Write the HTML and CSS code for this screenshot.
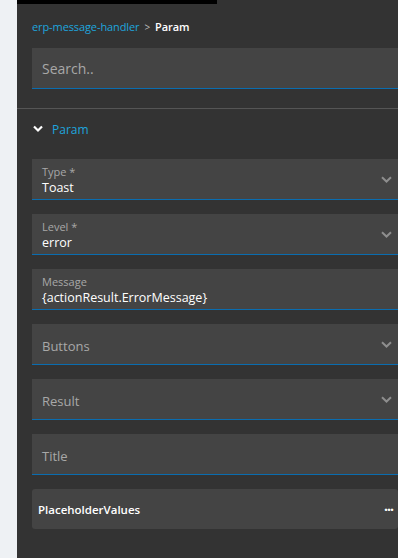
FILE: index.html
```html
<!DOCTYPE html>
<html lang="en">
<head>
  <meta charset="UTF-8">
  <title>Param</title>
  <link rel="stylesheet" href="styles.css">
</head>
<body>
  <div class="gutter"></div>
  <div class="panel">
    <div class="topbar"></div>

    <div class="breadcrumb">
      <a href="#" class="crumb-link">erp-message-handler</a>
      <span class="crumb-sep">&gt;</span>
      <span class="crumb-current">Param</span>
    </div>

    <div class="search">
      <input type="text" placeholder="Search..">
    </div>

    <div class="section">
      <div class="section-head">
        <svg class="caret" width="10" height="8" viewBox="0 0 10 8">
          <path d="M1 1.5 L5 5.5 L9 1.5" fill="none" stroke="#fff" stroke-width="2.2"/>
        </svg>
        <span>Param</span>
      </div>

      <div class="fields">
        <div class="field">
          <div class="field-body">
            <label>Type *</label>
            <div class="value">Toast</div>
          </div>
          <svg class="chev" width="11" height="7" viewBox="0 0 11 7"><path d="M1 1.2 L5.5 5.5 L10 1.2" fill="none" stroke="#8e8e8e" stroke-width="2"/></svg>
        </div>

        <div class="field">
          <div class="field-body">
            <label>Level *</label>
            <div class="value">error</div>
          </div>
          <svg class="chev" width="11" height="7" viewBox="0 0 11 7"><path d="M1 1.2 L5.5 5.5 L10 1.2" fill="none" stroke="#8e8e8e" stroke-width="2"/></svg>
        </div>

        <div class="field">
          <div class="field-body">
            <label>Message</label>
            <div class="value">{actionResult.ErrorMessage}</div>
          </div>
        </div>

        <div class="field">
          <div class="field-body">
            <div class="placeholder">Buttons</div>
          </div>
          <svg class="chev" width="11" height="7" viewBox="0 0 11 7"><path d="M1 1.2 L5.5 5.5 L10 1.2" fill="none" stroke="#8e8e8e" stroke-width="2"/></svg>
        </div>

        <div class="field">
          <div class="field-body">
            <div class="placeholder">Result</div>
          </div>
          <svg class="chev" width="11" height="7" viewBox="0 0 11 7"><path d="M1 1.2 L5.5 5.5 L10 1.2" fill="none" stroke="#8e8e8e" stroke-width="2"/></svg>
        </div>

        <div class="field">
          <div class="field-body">
            <div class="placeholder">Title</div>
          </div>
        </div>

        <div class="group">
          <span>PlaceholderValues</span>
          <span class="more">&middot;&middot;&middot;</span>
        </div>
      </div>
    </div>
  </div>
</body>
</html>
```

FILE: styles.css
```css
/* Base */
* {
  margin: 0;
  padding: 0;
  box-sizing: border-box;
}

body {
  display: flex;
  width: 398px;
  height: 558px;
  overflow: hidden;
  background: #333333;
  font-family: "Open Sans", "Noto Sans", sans-serif;
  color: #ffffff;
}

.gutter {
  width: 17px;
  flex-shrink: 0;
  background: #eef1f4;
}

.panel {
  flex: 1;
  min-width: 0;
  background: #333333;
}

.topbar {
  width: 200px;
  height: 4px;
  background: #000000;
}

/* Breadcrumb */
.breadcrumb {
  display: flex;
  align-items: center;
  gap: 5px;
  height: 21px;
  margin-top: 12px;
  padding-left: 15px;
  font-size: 11px;
  letter-spacing: -0.1px;
}

.crumb-link {
  color: #1ea5de;
  text-decoration: none;
}

.crumb-sep {
  color: #bbbbbb;
  font-size: 10px;
}

.crumb-current {
  color: #ffffff;
  font-weight: 600;
}

/* Search */
.search {
  margin: 11px 0 0 15px;
}

.search input {
  display: block;
  width: 100%;
  height: 41px;
  padding: 1px 10px 0;
  background: #444444;
  border: none;
  border-bottom: 1px solid #0a6db0;
  color: #ffffff;
  font-family: inherit;
  font-size: 14px;
  outline: none;
}

.search input::placeholder {
  color: #a8a8a8;
}

/* Section */
.section {
  margin-top: 19px;
  border-top: 1px solid #555555;
}

.section-head {
  display: flex;
  align-items: center;
  gap: 9px;
  height: 40px;
  padding-left: 16px;
  color: #1ea5de;
  font-size: 12px;
}

.fields {
  display: flex;
  flex-direction: column;
  gap: 14px;
  padding: 10px 0 0 15px;
}

.field {
  display: flex;
  align-items: center;
  height: 41px;
  padding: 0 6px 0 10px;
  background: #444444;
  border-bottom: 1px solid #0a6db0;
}

.field-body {
  flex: 1;
  min-width: 0;
  padding-top: 4px;
}

.field label {
  display: block;
  color: #a8a8a8;
  font-size: 11px;
  line-height: 14px;
}

.value {
  color: #ffffff;
  font-size: 12.5px;
  line-height: 18px;
}

.placeholder {
  color: #a8a8a8;
  font-size: 13px;
  line-height: 18px;
}

.chev {
  flex-shrink: 0;
}

.group {
  display: flex;
  align-items: center;
  justify-content: space-between;
  height: 40px;
  padding: 0 5px 0 6px;
  background: #444444;
  border-radius: 3px;
  font-size: 11.5px;
  font-weight: 600;
}

.more {
  font-size: 14px;
  font-weight: 700;
  letter-spacing: -1px;
}
```
